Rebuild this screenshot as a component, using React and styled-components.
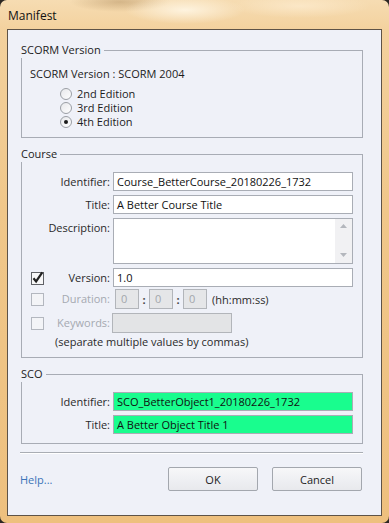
import React from "react";
import styled, { createGlobalStyle } from "styled-components";

const GlobalStyle = createGlobalStyle`
  html, body {
    margin: 0;
    padding: 0;
    background: #2b2723;
  }
  body {
    font-family: "Open Sans", "Noto Sans", sans-serif;
    font-size: 11px;
    color: #1c1c1c;
  }
  * {
    box-sizing: border-box;
  }
`;

const Window = styled.div`
  width: 389px;
  height: 523px;
  display: flex;
  flex-direction: column;
  border-radius: 7px;
  overflow: hidden;
  background:
    radial-gradient(ellipse 60px 14px at 185px 10px, rgba(255, 246, 228, 0.9), rgba(255, 246, 228, 0) 100%),
    radial-gradient(ellipse 50px 10px at 120px 2px, rgba(150, 110, 60, 0.35), rgba(150, 110, 60, 0) 100%),
    radial-gradient(ellipse 70px 12px at 300px 6px, rgba(255, 240, 215, 0.6), rgba(255, 240, 215, 0) 100%),
    linear-gradient(180deg, #f6dcb2 0%, #f3d19d 6%, #f0c78a 40%, #eec07e 100%);
`;

const TitleBar = styled.div`
  height: 29px;
  flex: none;
  display: flex;
  align-items: center;
  padding: 1px 0 0 8px;
  font-size: 12px;
  color: #111;
`;

const Client = styled.div`
  flex: 1;
  margin: 0 7px 7px;
  border: 1px solid #5e5347;
  background: #eff1f8;
  padding: 12px 18px 0 13px;
  display: flex;
  flex-direction: column;
`;

const GroupBox = styled.fieldset`
  margin: ${(p) => (p.$first ? "0" : "8px")} 0 0;
  padding: ${(p) => p.$pt}px 9px ${(p) => p.$pb}px 8px;
  border: 1px solid #a8acb5;
  min-width: 0;
`;

const Legend = styled.legend`
  margin-left: -9px;
  padding: 0 3px 0 0;
  line-height: 16px;
  color: #1c1c1c;
`;

const Line = styled.div`
  line-height: 16px;
`;

const RadioList = styled.div`
  margin: 5px 0 0 30px;
  display: flex;
  flex-direction: column;
`;

const RadioRow = styled.label`
  height: 14px;
  display: flex;
  align-items: center;
  gap: 5px;
  line-height: 14px;
`;

const Radio = ({ checked }) => (
  <svg width="12" height="12" viewBox="0 0 12 12">
    <defs>
      <linearGradient id="rg" x1="0" y1="0" x2="1" y2="1">
        <stop offset="0" stopColor="#e6e7ea" />
        <stop offset="1" stopColor="#ffffff" />
      </linearGradient>
    </defs>
    <circle cx="6" cy="6" r="5.5" fill="url(#rg)" stroke="#9a9ea4" />
    {checked && <circle cx="6" cy="6" r="2" fill="#1a1a1a" />}
  </svg>
);

const FormGrid = styled.div`
  display: flex;
  flex-direction: column;
`;

const FormRow = styled.div`
  display: grid;
  grid-template-columns: 18px 65px 240px;
  align-items: ${(p) => (p.$top ? "start" : "center")};
  margin-top: ${(p) => p.$mt ?? 4}px;
`;

const Label = styled.span`
  grid-column: 2;
  padding-right: 3px;
  text-align: right;
  white-space: nowrap;
  line-height: 16px;
  color: ${(p) => (p.$disabled ? "#a5a9b1" : "#2a2a2a")};
  margin-top: ${(p) => (p.$top ? "2px" : "0")};
`;

const TextBox = styled.div`
  grid-column: 3;
  height: ${(p) => p.$h ?? 19}px;
  border: 1px solid #a9adb5;
  background: ${(p) => (p.$green ? "#19fd8e" : "#ffffff")};
  padding: 0 3px;
  line-height: ${(p) => (p.$h ?? 19) - 2}px;
  color: #111;
  white-space: nowrap;
  overflow: hidden;
`;

const TextArea = styled.div`
  grid-column: 3;
  height: 46px;
  border: 1px solid #a9adb5;
  background: #fff;
  display: flex;
  justify-content: flex-end;
`;

const ScrollBar = styled.div`
  width: 17px;
  background: #f1f1f3;
  display: flex;
  flex-direction: column;
  justify-content: space-between;
  align-items: center;
  padding: 5px 0 6px;
`;

const Arrow = ({ down }) => (
  <svg width="7" height="4" viewBox="0 0 7 4">
    <path d={down ? "M0 0h7L3.5 4z" : "M0 4h7L3.5 0z"} fill="#b4b7bd" />
  </svg>
);

const CheckCell = styled.div`
  grid-column: 1;
  padding-left: 1px;
  display: flex;
  align-items: center;
`;

const CheckBox = ({ checked, disabled }) => (
  <svg width="14" height="14" viewBox="0 0 14 14">
    <rect
      x="0.5"
      y="1.5"
      width="12"
      height="12"
      fill={disabled ? "#f3f4f7" : "#f7f7f8"}
      stroke={disabled ? "#b3b7bf" : "#5f6166"}
    />
    {checked && <path d="M2.5 7.2l2.6 3.2 6.2-9" fill="none" stroke="#222" strokeWidth="2.2" />}
  </svg>
);

const TimeGroup = styled.div`
  grid-column: 3;
  display: flex;
  align-items: center;
  padding-left: 2px;
`;

const TimeBox = styled.div`
  width: 24px;
  height: 20px;
  border: 1px solid #b2b5ba;
  background: #e5e6e8;
  color: #a3a6ac;
  padding-left: 5px;
  line-height: 18px;
`;

const Colon = styled.span`
  width: 10px;
  text-align: center;
  font-weight: bold;
  color: #444;
`;

const Hint = styled.span`
  margin-left: 5px;
  color: #2a2a2a;
`;

const DisabledBox = styled.div`
  grid-column: 3;
  width: 120px;
  height: 20px;
  margin-left: -1px;
  border: 1px solid #b2b5ba;
  background: #e3e4e6;
`;

const Note = styled.div`
  grid-column: 2 / -1;
  padding-left: 7px;
  line-height: 16px;
  color: #2a2a2a;
`;

const Separator = styled.div`
  margin: 8px 0 0 -1px;
  height: 1px;
  background: #a9adb4;
  box-shadow: 0 1px 0 #ffffff;
`;

const Footer = styled.div`
  margin-top: 14px;
  display: flex;
  align-items: center;
  justify-content: space-between;
  padding-right: 1px;
`;

const HelpLink = styled.a`
  color: #3b74b8;
  text-decoration: none;
  margin-left: -1px;
`;

const Buttons = styled.div`
  display: flex;
  gap: 14px;
`;

const Button = styled.button`
  width: 90px;
  height: 24px;
  border: 1px solid #a3a7ae;
  border-radius: 2px;
  background: linear-gradient(180deg, #f7f7f9 0%, #eff0f3 50%, #e8e9ed 100%);
  font-family: inherit;
  font-size: 11px;
  color: #1c1c1c;
  padding: 0;
`;

export default function App() {
  return (
    <>
      <GlobalStyle />
      <Window>
        <TitleBar>Manifest</TitleBar>
        <Client>
          <GroupBox $first $pt={8} $pb={8}>
            <Legend>SCORM Version</Legend>
            <Line>SCORM Version : SCORM 2004</Line>
            <RadioList>
              <RadioRow>
                <Radio /> 2nd Edition
              </RadioRow>
              <RadioRow>
                <Radio /> 3rd Edition
              </RadioRow>
              <RadioRow>
                <Radio checked /> 4th Edition
              </RadioRow>
            </RadioList>
          </GroupBox>

          <GroupBox $pt={10} $pb={7}>
            <Legend>Course</Legend>
            <FormGrid>
              <FormRow $mt={0}>
                <Label>Identifier:</Label>
                <TextBox>Course_BetterCourse_20180226_1732</TextBox>
              </FormRow>
              <FormRow>
                <Label>Title:</Label>
                <TextBox>A Better Course Title</TextBox>
              </FormRow>
              <FormRow $top>
                <Label $top>Description:</Label>
                <TextArea>
                  <ScrollBar>
                    <Arrow />
                    <Arrow down />
                  </ScrollBar>
                </TextArea>
              </FormRow>
              <FormRow>
                <CheckCell>
                  <CheckBox checked />
                </CheckCell>
                <Label>Version:</Label>
                <TextBox>1.0</TextBox>
              </FormRow>
              <FormRow $mt={2}>
                <CheckCell>
                  <CheckBox disabled />
                </CheckCell>
                <Label $disabled>Duration:</Label>
                <TimeGroup>
                  <TimeBox>0</TimeBox>
                  <Colon>:</Colon>
                  <TimeBox>0</TimeBox>
                  <Colon>:</Colon>
                  <TimeBox>0</TimeBox>
                  <Hint>(hh:mm:ss)</Hint>
                </TimeGroup>
              </FormRow>
              <FormRow $mt={4}>
                <CheckCell>
                  <CheckBox disabled />
                </CheckCell>
                <Label $disabled>Keywords:</Label>
                <DisabledBox />
              </FormRow>
              <FormRow $mt={1}>
                <Note>(separate multiple values by commas)</Note>
              </FormRow>
            </FormGrid>
          </GroupBox>

          <GroupBox $pt={10} $pb={9}>
            <Legend>SCO</Legend>
            <FormGrid>
              <FormRow $mt={0}>
                <Label>Identifier:</Label>
                <TextBox $green>SCO_BetterObject1_20180226_1732</TextBox>
              </FormRow>
              <FormRow>
                <Label>Title:</Label>
                <TextBox $green>A Better Object Title 1</TextBox>
              </FormRow>
            </FormGrid>
          </GroupBox>

          <Separator />
          <Footer>
            <HelpLink href="#">Help...</HelpLink>
            <Buttons>
              <Button>OK</Button>
              <Button>Cancel</Button>
            </Buttons>
          </Footer>
        </Client>
      </Window>
    </>
  );
}
